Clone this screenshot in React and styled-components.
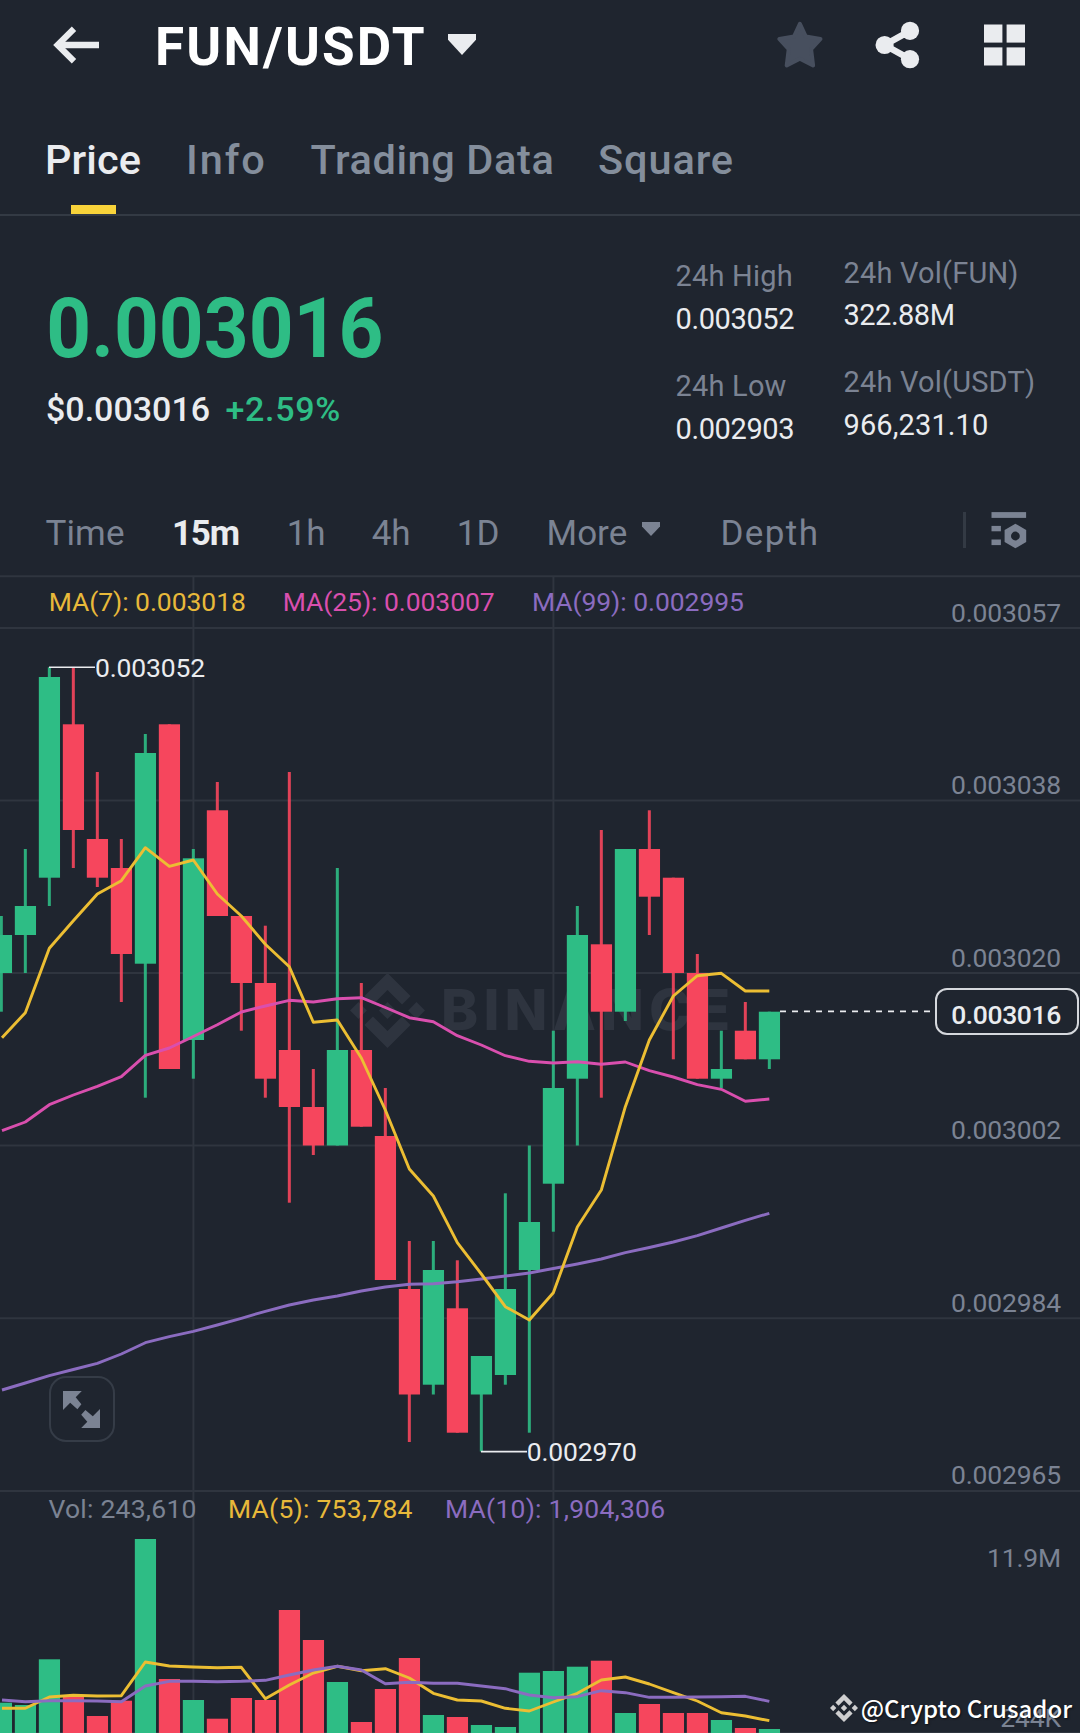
import React from 'react';
import styled, { createGlobalStyle } from 'styled-components';

const C = {
  bg: '#1f252f',
  white: '#eaecef',
  bright: '#ffffff',
  grey: '#848e9c',
  muted: '#7b8393',
  dim: '#474f5e',
  line: '#2f353f',
  green: '#2ebd85',
  red: '#f6465d',
  yellow: '#e8b93a',
  maYellow: '#ecbe33',
  pink: '#d94fae',
  purple: '#8b6cc0',
};

const GlobalStyle = createGlobalStyle`
  *, *::before, *::after { box-sizing: border-box; }
  body { margin: 0; background: ${C.bg}; }
`;

const Page = styled.div`
  display: flex;
  flex-direction: column;
  width: 1080px;
  height: 1733px;
  overflow: hidden;
  background: ${C.bg};
  color: ${C.white};
  font-family: Roboto, 'Liberation Sans', sans-serif;
  white-space: nowrap;
`;

/* ---------- header ---------- */

const Header = styled.header`
  display: grid;
  grid-template-columns: 103px 1fr auto;
  align-items: center;
  height: 89px;
  padding: 0 54px 0 52px;
`;

const Icon = styled.svg`
  display: block;
  flex: none;
`;

const Pair = styled.div`
  display: flex;
  align-items: center;
  gap: 20.5px;
`;

const Title = styled.h1`
  margin: 0;
  padding-top: 5px;
  font-size: 53px;
  font-weight: 700;
  line-height: 64px;
  letter-spacing: 2.2px;
  color: ${C.bright};
`;

const Actions = styled.div`
  display: flex;
  align-items: center;
  gap: 50px;
`;

/* ---------- tabs ---------- */

const Tabs = styled.nav`
  display: grid;
  grid-template-columns: 141px 124.5px 287.5px auto;
  justify-items: start;
  height: 127px;
  padding: 46px 0 0 45px;
  border-bottom: 2px solid #333a44;
`;

const Tab = styled.div`
  display: flex;
  flex-direction: column;
  align-items: center;
  justify-content: space-between;
  height: 79px;
  font-size: 41.5px;
  font-weight: 500;
  line-height: 50px;
  letter-spacing: ${(p) => p.$track || 0}px;
  color: ${(p) => (p.$active ? C.white : C.grey)};

  &::after {
    content: '';
    width: 45px;
    height: 9px;
    background: ${(p) => (p.$active ? '#f8d33a' : 'transparent')};
  }
`;

/* ---------- summary ---------- */

const Summary = styled.section`
  display: grid;
  grid-template-columns: 629.5px 168px auto;
  height: 284px;
  padding-left: 46px;
`;

const PriceBlock = styled.div`
  display: flex;
  flex-direction: column;
  gap: 5px;
  padding-top: 62.5px;
`;

const BigPrice = styled.div`
  font-size: 84px;
  font-weight: 700;
  line-height: 100px;
  color: ${C.green};
  transform: scaleX(0.932);
  transform-origin: 4px 50%;
`;

const SubRow = styled.div`
  display: flex;
  gap: 16px;
  font-size: 34px;
  font-weight: 500;
  line-height: 50px;
`;

const Fiat = styled.span`
  width: 163.5px;
`;

const Change = styled.span`
  letter-spacing: 0.7px;
  color: ${C.green};
`;

const StatColumn = styled.div`
  display: flex;
  flex-direction: column;
  gap: ${(p) => p.$gap}px;
  padding-top: ${(p) => p.$top}px;
`;

const Stat = styled.div`
  display: flex;
  flex-direction: column;
  gap: 3px;
  font-size: 29px;
  line-height: 40px;
`;

const StatLabel = styled.span`
  color: ${C.muted};
  letter-spacing: 0.2px;
`;

const StatValue = styled.span`
  margin-top: ${(p) => p.$lift || 0}px;
  letter-spacing: ${(p) => p.$track}px;
`;

/* ---------- interval toolbar ---------- */

const Toolbar = styled.nav`
  display: grid;
  grid-template-columns: 126.4px 114.8px 85px 85.1px 89.8px 173.9px 242.5px 28px auto;
  height: 75px;
  padding: 8px 0 0 45.5px;
`;

const Interval = styled.span`
  display: flex;
  gap: 15px;
  padding-top: 1px;
  font-size: 35px;
  line-height: 50px;
  font-weight: ${(p) => (p.$active ? 700 : 400)};
  letter-spacing: ${(p) => p.$track || 0}px;
  color: ${(p) => (p.$active ? C.white : C.muted)};
`;

const CaretBox = styled.span`
  padding-top: 13px;
`;

const Divider = styled.span`
  width: 3px;
  height: 36px;
  margin-top: 4px;
  background: #333a44;
`;

const SettingsBox = styled.span`
  padding-top: 4px;
`;

/* ---------- chart ---------- */

const Chart = styled.section`
  position: relative;
  display: grid;
  grid-template: 916px 242px / 1080px;
  height: 1158px;
`;

const Canvas = styled.svg`
  grid-area: 1 / 1 / 3 / 2;
  display: block;
`;

const Watermark = styled.div`
  grid-area: 1 / 1;
  display: flex;
  align-items: center;
  align-self: start;
  gap: 16px;
  height: 76px;
  margin: 397px 0 0 350px;
  font-family: Inter, 'Liberation Sans', sans-serif;
  font-size: 56px;
  font-weight: 800;
  letter-spacing: 5.2px;
  color: #2e343f;
`;

const Legend = styled.div`
  grid-area: ${(p) => p.$row} / 1;
  display: grid;
  grid-template-columns: ${(p) => p.$cols};
  align-self: start;
  padding: ${(p) => p.$pad};
  font-size: 26.5px;
  line-height: 30px;
  letter-spacing: ${(p) => p.$track || 0}px;
`;

const LegendItem = styled.span`
  color: ${(p) => p.$color};
`;

const PriceScale = styled.div`
  grid-area: 1 / 1;
  display: flex;
  flex-direction: column;
  gap: 142.6px;
  align-items: flex-end;
  align-self: start;
  padding: 22.5px 19px 0 0;
  font-size: 26.5px;
  line-height: 30px;
  letter-spacing: -0.15px;
  color: ${C.muted};
`;

const VolumeScale = styled(PriceScale)`
  grid-area: 2 / 1;
  gap: 130px;
  padding-top: 51.5px;
`;

const PriceTag = styled.div`
  position: absolute;
  top: 413px;
  left: 935px;
  display: flex;
  justify-content: center;
  width: 144px;
  height: 47px;
  padding: 10px 2px 0 0;
  border: 2px solid #d5d8dd;
  border-radius: 12px;
  background: ${C.bg};
  font-size: 26.5px;
  font-weight: 500;
  line-height: 30px;
  letter-spacing: -0.4px;
`;

const Marker = styled.span`
  position: absolute;
  left: ${(p) => p.$x}px;
  top: ${(p) => p.$y}px;
  font-size: 26.5px;
  line-height: 30px;
  letter-spacing: -0.15px;
`;

const ExpandButton = styled.div`
  position: absolute;
  left: 48.5px;
  top: 801px;
  display: grid;
  place-items: center;
  width: 66px;
  height: 66px;
  border: 2px solid #353c47;
  border-radius: 17px;
  background: rgba(31, 37, 47, 0.8);
`;

const Credit = styled.div`
  position: absolute;
  right: 8px;
  bottom: 7px;
  display: flex;
  align-items: center;
  gap: 3px;
  font-family: 'Noto Sans CJK SC', 'Noto Sans', sans-serif;
  font-size: 24px;
  font-weight: 500;
  line-height: 36px;
  color: ${C.bright};
  text-shadow: 1px 1px 2px rgba(0, 0, 0, 0.6);
`;

/* ---------- data: [up, bodyTop, bodyBottom, high, low, volumeTop] ---------- */

const candles = [
  [1, 935, 973, 916, 1011.7, 1702.7],
  [1, 906, 935, 849, 973, 1705],
  [1, 677, 877.7, 667.3, 906, 1659.3],
  [0, 724.3, 830, 667.3, 868, 1696.7],
  [0, 839, 877.7, 772, 887, 1716],
  [0, 868, 954, 839, 1002, 1700.7],
  [1, 753, 963.7, 734, 1097.7, 1539],
  [0, 724.3, 1069, 724.3, 1069, 1679],
  [1, 858.3, 1040, 849, 1078.7, 1700],
  [0, 810.3, 916, 782, 916, 1718.7],
  [0, 916, 983, 916, 1030.7, 1698],
  [0, 983, 1078.7, 925.7, 1097.7, 1700],
  [0, 1050, 1107, 772, 1202.7, 1610],
  [0, 1107, 1145.5, 1069, 1155, 1640],
  [1, 1050, 1145.5, 868, 1145.5, 1682],
  [0, 1050, 1126.7, 983, 1126.7, 1722],
  [0, 1136, 1280, 1088, 1280, 1689],
  [0, 1289, 1394.5, 1241, 1442, 1658],
  [1, 1270, 1384.7, 1241, 1394.5, 1715],
  [0, 1308.3, 1432.7, 1260.3, 1432.7, 1717],
  [1, 1356, 1394.5, 1356, 1451.5, 1725],
  [1, 1289, 1375, 1193.3, 1384.7, 1727],
  [1, 1222, 1270, 1145.5, 1432.7, 1672.7],
  [1, 1088, 1183.7, 1030.7, 1231.7, 1671],
  [1, 935, 1078.7, 906, 1145.5, 1666.7],
  [0, 944.3, 1011.7, 830, 1097.7, 1660.7],
  [1, 849, 1011.7, 849, 1021, 1713],
  [0, 849, 896.7, 810.3, 935, 1704],
  [0, 877.7, 973, 877.7, 1059.3, 1713],
  [0, 973, 1078.7, 954, 1078.7, 1713],
  [1, 1069, 1078.7, 1030.7, 1088, 1720],
  [0, 1030.7, 1059.3, 1002, 1059.3, 1728],
  [1, 1011.7, 1059.3, 1011.7, 1069, 1729],
];

const ma7 = [1037.7, 1012.7, 948.3, 920.7, 894, 880.7, 847.7, 866.3, 860, 894, 916, 944.3, 966.7, 1022.3, 1020, 1058, 1110, 1169, 1196, 1242.7, 1274, 1306.7, 1320, 1292.7, 1227, 1190, 1106.7, 1040, 996, 975.7, 973.3, 991, 991];
const ma25 = [1130.7, 1122, 1104.7, 1095, 1086.3, 1076.7, 1055.3, 1048, 1036.5, 1024.7, 1012, 1006, 1000.3, 1002, 998.7, 997.7, 1007.5, 1017.7, 1021.7, 1035.7, 1045, 1055.7, 1061.3, 1063, 1061.7, 1064.3, 1062, 1070.7, 1077, 1084.7, 1089.3, 1101.3, 1099];
const ma99 = [1390, 1383, 1375.7, 1369.5, 1363.3, 1354, 1342.7, 1336.7, 1331.3, 1325, 1318.3, 1311.3, 1305, 1300, 1296, 1291, 1287, 1284.3, 1283.7, 1281.7, 1279, 1276, 1273, 1268.5, 1264, 1259, 1252.7, 1247.5, 1242, 1235.7, 1228, 1220.3, 1213.3];
const vol5 = [1708.3, 1708.3, 1697, 1695.3, 1696, 1695.7, 1662, 1666, 1667, 1667.7, 1667.3, 1698.7, 1685, 1673, 1666.3, 1670.7, 1668.7, 1678, 1693.3, 1700, 1701, 1708.3, 1711, 1702, 1693.3, 1680, 1677, 1684, 1692.7, 1701, 1712.7, 1716, 1720.7];
const vol10 = [1700, 1701.7, 1700.7, 1700.7, 1701, 1701.7, 1686, 1681.3, 1681.3, 1681.7, 1681.3, 1680.3, 1675, 1670, 1666.3, 1670, 1683.7, 1682.3, 1683.3, 1683.3, 1686, 1688.7, 1695, 1697.7, 1696.7, 1690.7, 1692.7, 1697.3, 1697.3, 1697, 1696.7, 1696.3, 1701.3];

const cx = (i) => 1.33 + 24 * i;
const points = (values) => values.map((y, i) => `${i === 0 ? 2 : cx(i)},${y}`).join(' ');

const priceLevels = ['0.003057', '0.003038', '0.003020', '0.003002', '0.002984', '0.002965'];

function Line({ values, color }) {
  return <polyline points={points(values)} fill="none" stroke={color} strokeWidth="2.9" strokeLinejoin="round" />;
}

function BinanceMark({ size, color }) {
  return (
    <Icon width={size} height={size} viewBox="0 0 126.6 126.6" fill={color}>
      <path d="M38.7 53.2 63.3 28.6 87.9 53.2 102.2 38.9 63.3 0 24.4 38.9z" />
      <path d="M0 63.3 14.3 49 28.6 63.3 14.3 77.6z" />
      <path d="M38.7 73.4 63.3 98 87.9 73.4 102.2 87.7 63.3 126.6 24.4 87.7z" />
      <path d="M98 63.3 112.3 49 126.6 63.3 112.3 77.6z" />
      <path d="M77.8 63.3 63.3 48.8 48.8 63.3 63.3 77.8z" />
    </Icon>
  );
}

function PriceChart() {
  return (
    <Chart>
      <Canvas width="1080" height="1158" viewBox="0 575 1080 1158">
        <g stroke={C.line} strokeWidth="2">
          <line x1="0" x2="1080" y1="576.3" y2="576.3" />
          {[628, 800.4, 973, 1145.6, 1318.2, 1491].map((y) => (
            <line key={y} x1="0" x2="1080" y1={y} y2={y} />
          ))}
          <line x1="193.4" x2="193.4" y1="577" y2="1733" />
          <line x1="553.4" x2="553.4" y1="577" y2="1733" />
          <line x1="0" x2="1080" y1="1733" y2="1733" />
        </g>
      </Canvas>

      <Watermark>
        <BinanceMark size={75} color="#2e343f" />
        BINANCE
      </Watermark>

      <Canvas width="1080" height="1158" viewBox="0 575 1080 1158">
        {candles.map(([up, top, bottom, high, low, vol], i) => (
          <g key={i} fill={up ? C.green : C.red}>
            <rect x={cx(i) - 1.5} y={high} width="3" height={low - high} opacity="0.9" />
            <rect x={cx(i) - 10.5} y={top} width="21.2" height={bottom - top} />
            <rect x={cx(i) - 10.5} y={vol} width="21.2" height={1733 - vol} />
          </g>
        ))}
        <Line values={ma99} color={C.purple} />
        <Line values={ma25} color={C.pink} />
        <Line values={ma7} color={C.maYellow} />
        <Line values={vol5} color={C.maYellow} />
        <Line values={vol10} color={C.purple} />
        <g stroke={C.white} strokeWidth="1.6">
          <line x1="49" x2="95" y1="667.3" y2="667.3" />
          <line x1="481" x2="527" y1="1451.6" y2="1451.6" />
          <line x1="780" x2="932" y1="1011.4" y2="1011.4" strokeDasharray="6 6" />
        </g>
      </Canvas>

      <Legend $row={1} $cols="234px 249.2px auto" $pad="12px 0 0 48.7px" $track={-0.06}>
        <LegendItem $color={C.yellow}>MA(7): 0.003018</LegendItem>
        <LegendItem $color={C.pink}>MA(25): 0.003007</LegendItem>
        <LegendItem $color={C.purple}>MA(99): 0.002995</LegendItem>
      </Legend>
      <Legend $row={2} $cols="179.5px 217px auto" $pad="3px 0 0 48.5px" $track={0.23}>
        <LegendItem $color={C.muted}>Vol: 243,610</LegendItem>
        <LegendItem $color={C.yellow}>MA(5): 753,784</LegendItem>
        <LegendItem $color={C.purple}>MA(10): 1,904,306</LegendItem>
      </Legend>

      <PriceScale>
        {priceLevels.map((p) => (
          <span key={p}>{p}</span>
        ))}
      </PriceScale>
      <VolumeScale>
        <span>11.9M</span>
        <span>244K</span>
      </VolumeScale>

      <PriceTag>0.003016</PriceTag>
      <Marker $x={95} $y={78.4}>0.003052</Marker>
      <Marker $x={526.7} $y={862.4}>0.002970</Marker>

      <ExpandButton>
        <Icon width="37" height="37" viewBox="0 0 37 37" fill={C.muted}>
          <path d="M0 0H18.8L12.7 6.3 18.4 13.2 14.4 18.2 7.2 11.8 0 19z" />
          <path d="M37 37H18.2L24.3 30.7 18.2 23.8 22.4 19 29.8 25.2 37 18z" />
        </Icon>
      </ExpandButton>

      <Credit>
        <BinanceMark size={28} color="#cfcfd0" />
        @Crypto Crusador
      </Credit>
    </Chart>
  );
}

export default function App() {
  return (
    <>
      <GlobalStyle />
      <Page>
        <Header>
          <Icon width="48" height="40" viewBox="51 26 48 40" fill="none" stroke={C.white}>
            <path d="M56 46H98" strokeWidth="6.6" />
            <path d="M73 29.8 56.6 46 73 62.2" strokeWidth="6.2" />
          </Icon>
          <Pair>
            <Title>FUN/USDT</Title>
            <Icon width="30" height="21" viewBox="0 0 30 21" fill={C.white}>
              <path d="M1 0H29V5.8L15 21 1 5.8z" />
            </Icon>
          </Pair>
          <Actions>
            <Icon width="48" height="48" viewBox="775.5 22 48 48" fill={C.dim} stroke={C.dim} strokeWidth="4" strokeLinejoin="round">
              <path d="M800.4 24.8 806.3 37.6 821 39.9 811.6 50.2 813.6 66.4 800.4 59.8 787.2 66.4 789.2 50.2 779.8 39.9 794.5 37.6z" />
            </Icon>
            <Icon width="48" height="48" viewBox="873 22 48 48" fill={C.white} stroke={C.white}>
              <path d="M910 31.8 884.6 46 910 60.2" fill="none" strokeWidth="6.5" />
              <g stroke="none">
                <circle cx="910" cy="31.8" r="9.1" />
                <circle cx="884.6" cy="46" r="9.1" />
                <circle cx="910" cy="60.2" r="9.1" />
              </g>
            </Icon>
            <Icon width="55" height="42" viewBox="971 25 55 42" fill={C.white}>
              <rect x="984" y="25.5" width="18.4" height="18.1" />
              <rect x="1006.6" y="25.5" width="18.4" height="18.1" />
              <rect x="984" y="48.4" width="18.4" height="18.1" />
              <rect x="1006.6" y="48.4" width="18.4" height="18.1" />
            </Icon>
          </Actions>
        </Header>

        <Tabs>
          <Tab $active $track={0.1}>Price</Tab>
          <Tab $track={1.9}>Info</Tab>
          <Tab $track={0.6}>Trading Data</Tab>
          <Tab $track={0.9}>Square</Tab>
        </Tabs>

        <Summary>
          <PriceBlock>
            <BigPrice>0.003016</BigPrice>
            <SubRow>
              <Fiat>$0.003016</Fiat>
              <Change>+2.59%</Change>
            </SubRow>
          </PriceBlock>
          <StatColumn $top={39.8} $gap={27}>
            <Stat>
              <StatLabel>24h High</StatLabel>
              <StatValue $track={-0.38}>0.003052</StatValue>
            </Stat>
            <Stat>
              <StatLabel>24h Low</StatLabel>
              <StatValue $track={-0.38}>0.002903</StatValue>
            </Stat>
          </StatColumn>
          <StatColumn $top={37} $gap={27}>
            <Stat>
              <StatLabel>24h Vol(FUN)</StatLabel>
              <StatValue $lift={-1} $track={-0.5}>322.88M</StatValue>
            </Stat>
            <Stat>
              <StatLabel>24h Vol(USDT)</StatLabel>
              <StatValue $track={0.12}>966,231.10</StatValue>
            </Stat>
          </StatColumn>
        </Summary>

        <Toolbar>
          <Interval $track={0.1}>Time</Interval>
          <Interval $active $track={-1.2}>15m</Interval>
          <Interval>1h</Interval>
          <Interval>4h</Interval>
          <Interval>1D</Interval>
          <Interval>
            More
            <CaretBox>
              <Icon width="18" height="14" viewBox="0 0 18 14" fill={C.muted}>
                <path d="M0 0H18V4.5L9 14 0 4.5z" />
              </Icon>
            </CaretBox>
          </Interval>
          <Interval $track={1.4}>Depth</Interval>
          <Divider />
          <SettingsBox>
            <Icon width="36" height="37" viewBox="990.5 521.5 36 37" fill={C.muted}>
              <rect x="991" y="521.6" width="34.6" height="5.8" />
              <rect x="991" y="535.4" width="9.4" height="5.4" />
              <rect x="991" y="549" width="9.4" height="5.6" />
              <path
                fillRule="evenodd"
                d="M1014.9 533.2 1025.7 539.4V551.6L1014.9 557.8 1004.1 551.6V539.4zM1014.9 541.1a4.4 4.4 0 1 0 0 8.8a4.4 4.4 0 1 0 0-8.8z"
              />
            </Icon>
          </SettingsBox>
        </Toolbar>

        <PriceChart />
      </Page>
    </>
  );
}
